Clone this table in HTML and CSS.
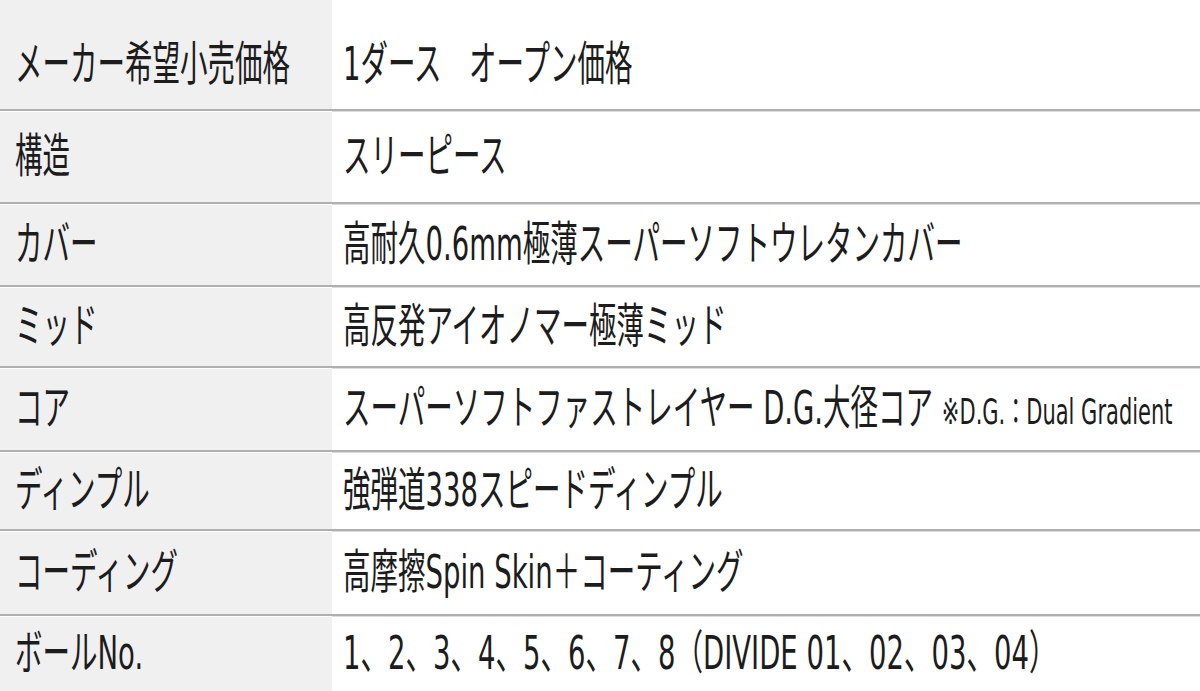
FILE: index.html
```html
<!DOCTYPE html>
<html lang="ja">
<head>
<meta charset="utf-8">
<title>Spec</title>
<link rel="stylesheet" href="styles.css">
</head>
<body>
<div class="spec">
  <div class="th first"><span class="t">メーカー希望小売価格</span></div>
  <div class="td first"><span class="t">1ダース　オープン価格</span></div>

  <div class="th"><span class="t">構造</span></div>
  <div class="td"><span class="t">スリーピース</span></div>

  <div class="th"><span class="t">カバー</span></div>
  <div class="td"><span class="t">高耐久0.6mm極薄スーパーソフトウレタンカバー</span></div>

  <div class="th"><span class="t">ミッド</span></div>
  <div class="td"><span class="t">高反発アイオノマー極薄ミッド</span></div>

  <div class="th"><span class="t">コア</span></div>
  <div class="td"><span class="t">スーパーソフトファストレイヤー D.G.大径コア <small class="note">※D.G.：Dual Gradient</small></span></div>

  <div class="th"><span class="t">ディンプル</span></div>
  <div class="td"><span class="t">強弾道338スピードディンプル</span></div>

  <div class="th"><span class="t">コーディング</span></div>
  <div class="td"><span class="t">高摩擦Spin Skin＋コーティング</span></div>

  <div class="th"><span class="t">ボールNo.</span></div>
  <div class="td"><span class="t">1、2、3、4、5、6、7、8（DIVIDE 01、02、03、04）</span></div>
</div>
</body>
</html>
```
FILE: styles.css
```css
html, body {
  margin: 0;
  padding: 0;
  background: #ffffff;
}

body {
  font-family: "DejaVu Sans", "Noto Sans CJK JP", sans-serif;
  font-weight: 400;
  color: #1c1c1c;
  overflow: hidden;
}

.spec {
  display: grid;
  grid-template-columns: 332px 1fr;
  grid-template-rows: 109px 93px 83px 81px 84px 79px 85px 77px;
  width: 1200px;
  height: 691px;
}

.th,
.td {
  display: flex;
  align-items: center;
  box-sizing: border-box;
  border-top: 2px solid #b0b0b0;
  font-size: 27.5px;
  line-height: 1;
  white-space: nowrap;
}

.th {
  background: #f0f0f0;
  padding-left: 15px;
  box-shadow: inset 0 1px 0 #ffffff;
}

.td {
  background: #ffffff;
  padding-left: 11px;
  box-shadow: inset 0 1px 0 #dcdcdc;
}

.first {
  border-top: none;
  box-shadow: none;
  padding-top: 20px;
}

.t {
  display: inline-block;
  transform: scaleY(1.7);
  transform-origin: 50% 50%;
}

.note {
  font-size: 21px;
  color: #1c1c1c;
}
```
